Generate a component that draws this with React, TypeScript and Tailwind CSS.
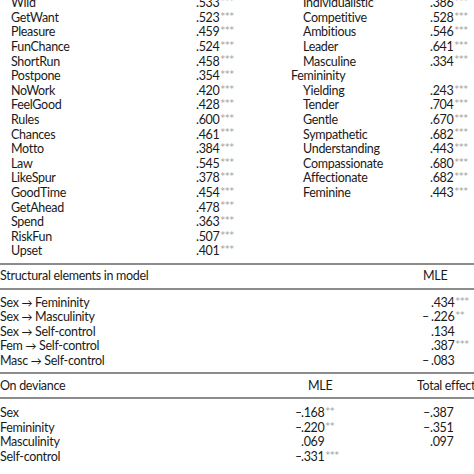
import React from "react";

type Row = [string, string, string];

const selfControl: Row[] = [
  ["Wild", ".533", "***"],
  ["GetWant", ".523", "***"],
  ["Pleasure", ".459", "***"],
  ["FunChance", ".524", "***"],
  ["ShortRun", ".458", "***"],
  ["Postpone", ".354", "***"],
  ["NoWork", ".420", "***"],
  ["FeelGood", ".428", "***"],
  ["Rules", ".600", "***"],
  ["Chances", ".461", "***"],
  ["Motto", ".384", "***"],
  ["Law", ".545", "***"],
  ["LikeSpur", ".378", "***"],
  ["GoodTime", ".454", "***"],
  ["GetAhead", ".478", "***"],
  ["Spend", ".363", "***"],
  ["RiskFun", ".507", "***"],
  ["Upset", ".401", "***"],
];

const gender: (Row | string)[] = [
  ["Individualistic", ".386", "***"],
  ["Competitive", ".528", "***"],
  ["Ambitious", ".546", "***"],
  ["Leader", ".641", "***"],
  ["Masculine", ".334", "***"],
  "Femininity",
  ["Yielding", ".243", "***"],
  ["Tender", ".704", "***"],
  ["Gentle", ".670", "***"],
  ["Sympathetic", ".682", "***"],
  ["Understanding", ".443", "***"],
  ["Compassionate", ".680", "***"],
  ["Affectionate", ".682", "***"],
  ["Feminine", ".443", "***"],
];

const structural: [string, string, string, string][] = [
  ["Sex", "Femininity", ".434", "***"],
  ["Sex", "Masculinity", "–.226", "**"],
  ["Sex", "Self-control", ".134", ""],
  ["Fem", "Self-control", ".387", "***"],
  ["Masc", "Self-control", "–.083", ""],
];

const deviance: [string, string, string, string][] = [
  ["Sex", "–.168", "**", "–.387"],
  ["Femininity", "–.220", "**", "–.351"],
  ["Masculinity", ".069", "", ".097"],
  ["Self-control", "–.331", "***", ""],
];

function Stars({ s }: { s: string }) {
  if (!s) return null;
  return (
    <span
      className="text-[9px] leading-[9px] tracking-normal text-[#9c9c9c] self-start mt-[1px] ml-[1px]"
      style={{ fontFamily: "'DejaVu Sans', sans-serif" }}
    >
      {s}
    </span>
  );
}

function Num({ v, pad }: { v: string; pad: string }) {
  const neg = v.startsWith("–");
  return (
    <span className="flex shrink-0">
      <span className={`${pad} shrink-0 overflow-hidden text-left`}>{neg ? "–" : ""}</span>
      <span>{neg ? v.slice(1) : v}</span>
    </span>
  );
}

function Rule() {
  return <div className="h-[2px] w-full bg-[#8c8c8c]" />;
}

export default function App() {
  return (
    <div
      className="w-[474px] h-[474px] overflow-hidden bg-white text-[#1a1a1a] text-[12.5px] leading-[14px] tracking-[-0.3px]"
      style={{ fontFamily: "Lato, 'Open Sans', sans-serif" }}
    >
      <div className="flex -mt-[4px]">
        <div className="w-[237px] shrink-0 pl-[11px] flex flex-col">
          {selfControl.map(([l, v, s]) => (
            <div key={l} className="flex h-[14.6px] items-center">
              <span className="w-[185px] shrink-0">{l}</span>
              <span className="flex items-center h-full">
                {v}
                <Stars s={s} />
              </span>
            </div>
          ))}
        </div>
        <div className="flex-1 flex flex-col">
          {gender.map((r) =>
            typeof r === "string" ? (
              <div key={r} className="flex h-[14.6px] items-center pl-[54px]">
                {r}
              </div>
            ) : (
              <div key={r[0]} className="flex h-[14.6px] items-center">
                <span className="w-[193px] shrink-0 pl-[66px]">{r[0]}</span>
                <span className="flex items-center h-full">
                  {r[1]}
                  <Stars s={r[2]} />
                </span>
              </div>
            )
          )}
        </div>
      </div>

      <div className="mt-[4px]">
        <Rule />
      </div>
      <div className="flex h-[23px] items-center">
        <span className="w-[423px] shrink-0">Structural elements in model</span>
        <span className="shrink-0">MLE</span>
      </div>
      <Rule />
      <div className="flex flex-col pt-[6px]">
        {structural.map(([a, b, v, s]) => (
          <div key={a + b} className="flex h-[14.5px] items-center">
            <span className="w-[422px] shrink-0">
              {a} <span className="text-[11px]">→</span> {b}
            </span>
            <span className="flex items-center h-full">
              <Num v={v} pad="w-[9px]" />
              <Stars s={s} />
            </span>
          </div>
        ))}
      </div>
      <div className="mt-[4px]">
        <Rule />
      </div>
      <div className="flex h-[23px] items-center">
        <span className="w-[308px] shrink-0">On deviance</span>
        <span className="w-[109px] shrink-0">MLE</span>
        <span className="whitespace-nowrap shrink-0">Total effect</span>
      </div>
      <Rule />
      <div className="flex flex-col pt-[7px]">
        {deviance.map(([l, v, s, t]) => (
          <div key={l} className="flex h-[14.5px] items-center">
            <span className="w-[295px] shrink-0">{l}</span>
            <span className="w-[128px] shrink-0 flex items-center h-full">
              <Num v={v} pad="w-[6px]" />
              <Stars s={s} />
            </span>
            <span className="flex items-center">{t && <Num v={t} pad="w-[7px]" />}</span>
          </div>
        ))}
      </div>
    </div>
  );
}
